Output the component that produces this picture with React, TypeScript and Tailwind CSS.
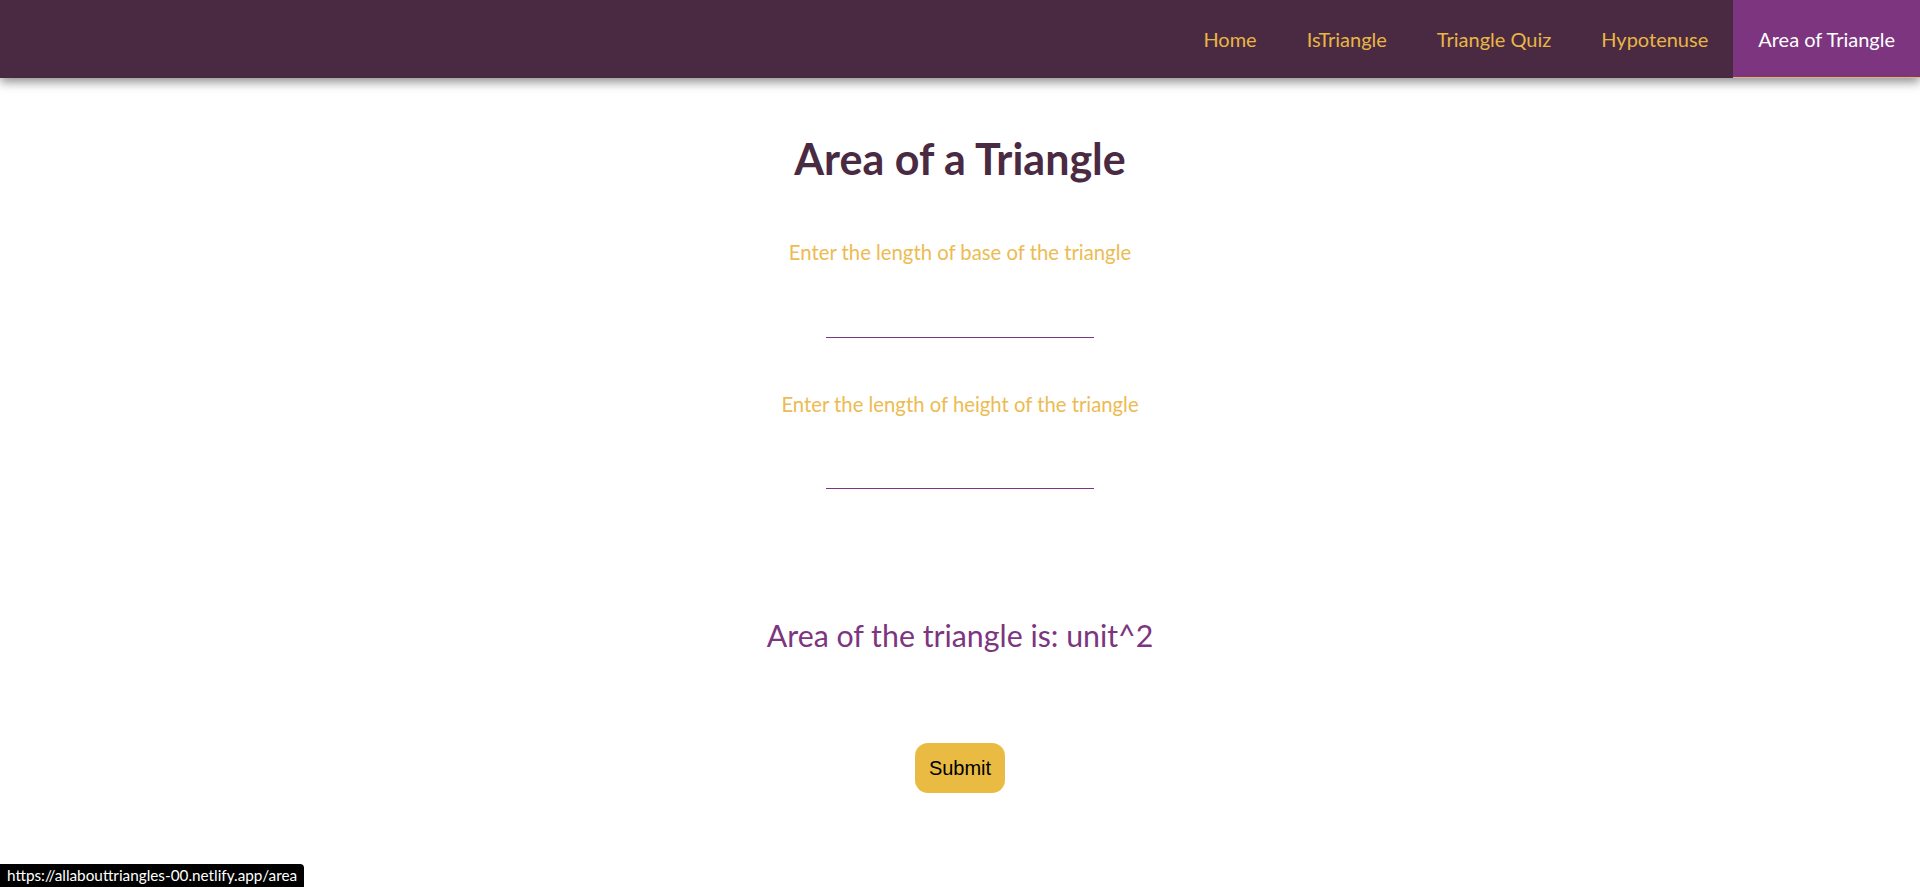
import React from 'react';

const navLinks = [
  { label: 'Home', active: false },
  { label: 'IsTriangle', active: false },
  { label: 'Triangle Quiz', active: false },
  { label: 'Hypotenuse', active: false },
  { label: 'Area of Triangle', active: true },
];

const font = { fontFamily: 'Lato, "Open Sans", sans-serif' };

const App = () => {
  return (
    <div className="min-h-screen bg-white flex flex-col" style={font}>
      {/* Navbar */}
      <nav className="relative z-10 h-[78px] bg-[#4a2a42] shadow-[0_4px_10px_rgba(0,0,0,0.45)] flex justify-end">
        {navLinks.map((link) => (
          <a
            key={link.label}
            href="#"
            className={
              link.active
                ? 'h-full flex items-center px-[25px] text-[20px] text-white bg-[#7c357e] border-b border-[#e2b96a]'
                : 'h-full flex items-center px-[25px] text-[20px] text-[#e9b545]'
            }
          >
            {link.label}
          </a>
        ))}
      </nav>

      {/* Area form */}
      <main className="flex flex-col items-center">
        <h1 className="mt-[55px] text-[43px] leading-[1.2] font-bold text-[#4a2a42]">Area of a Triangle</h1>

        <label className="mt-[55px] text-[20.3px] leading-[24px] text-[#ecbb52]">Enter the length of base of the triangle</label>
        <input
          type="number"
          className="mt-[34px] h-[40px] w-[268px] border-b border-[#7c357e] outline-none text-center text-[20px]"
        />

        <label className="mt-[54px] text-[20.3px] leading-[24px] text-[#ecbb52]">Enter the length of height of the triangle</label>
        <input
          type="number"
          className="mt-[33px] h-[40px] w-[268px] border-b border-[#7c357e] outline-none text-center text-[20px]"
        />

        <p className="mt-[128px] text-[30.3px] leading-[36px] text-[#7c357e]">Area of the triangle is: unit^2</p>

        <button
          className="mt-[90px] h-[50px] w-[90px] rounded-[13px] bg-[#e9bb42] text-[20px] text-black"
          style={{ fontFamily: '"Liberation Sans", Arial, sans-serif' }}
        >
          Submit
        </button>
      </main>

      {/* Link preview in the status bar */}
      <div className="fixed bottom-0 left-0 h-[23px] px-[7px] flex items-center bg-black text-white text-[15.3px] rounded-tr-[4px]">
        https://allabouttriangles-00.netlify.app/area
      </div>
    </div>
  );
};

export default App;
